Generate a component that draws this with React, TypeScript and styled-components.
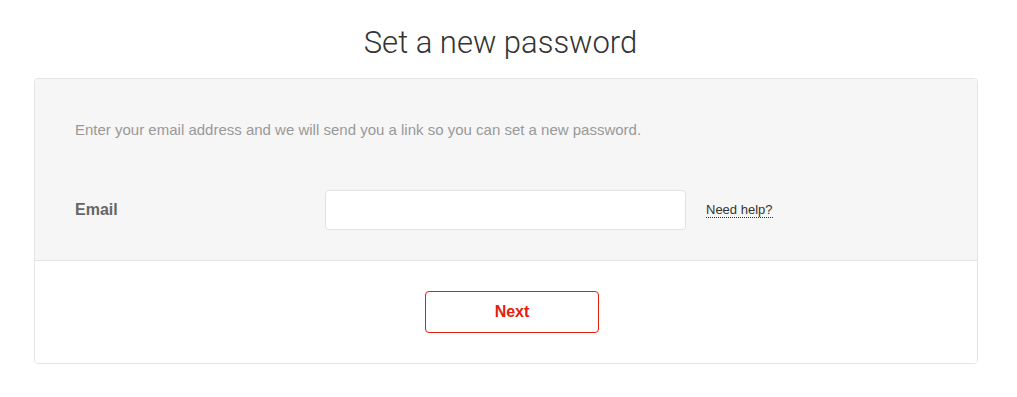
import React from "react";
import styled, { createGlobalStyle } from "styled-components";

const Global = createGlobalStyle`
  html, body { margin: 0; padding: 0; background: #fff; }
  body { font-family: "Liberation Sans", Arial, sans-serif; }
  * { box-sizing: border-box; }
`;

const Page = styled.div`
  padding: 0 39px 0 34px;
`;

const Title = styled.h1`
  margin: 0;
  padding: 24px 11px 0 0;
  height: 78px;
  text-align: center;
  font-family: Roboto, "Liberation Sans", sans-serif;
  font-weight: 300;
  font-size: 31px;
  line-height: 38px;
  color: #333;
`;

const Card = styled.div`
  border: 1px solid #e4e4e4;
  border-radius: 4px;
  overflow: hidden;
`;

const FormSection = styled.div`
  background: #f6f6f6;
  padding: 41px 40px 30px;
  border-bottom: 1px solid #e4e4e4;
`;

const Intro = styled.p`
  margin: 0 0 50px;
  font-size: 15px;
  line-height: 20px;
  color: #999;
`;

const Row = styled.div`
  display: flex;
  align-items: center;
`;

const Label = styled.label`
  width: 250px;
  font-size: 16px;
  font-weight: bold;
  color: #666;
`;

const Input = styled.input`
  width: 361px;
  height: 40px;
  border: 1px solid #e2e2e2;
  border-radius: 4px;
  background: #fff;
  outline: none;
  padding: 0 10px;
  font-size: 14px;
`;

const Help = styled.a`
  margin-left: 20px;
  font-size: 13px;
  color: #333;
  text-decoration: none;
  border-bottom: 1px dotted #333;
  line-height: 15px;
`;

const Actions = styled.div`
  display: flex;
  justify-content: center;
  padding: 30px 0 30px 12px;
  background: #fff;
`;

const NextButton = styled.button`
  width: 174px;
  height: 42px;
  border: 1px solid #e3200c;
  border-radius: 4px;
  background: #fff;
  color: #e3200c;
  font-family: "Liberation Sans", Arial, sans-serif;
  font-weight: bold;
  font-size: 16px;
  cursor: pointer;
`;

export default function App() {
  return (
    <Page>
      <Global />
      <Title>Set a new password</Title>
      <Card>
        <FormSection>
          <Intro>Enter your email address and we will send you a link so you can set a new password.</Intro>
          <Row>
            <Label htmlFor="email">Email</Label>
            <Input id="email" type="email" />
            <Help href="#">Need help?</Help>
          </Row>
        </FormSection>
        <Actions>
          <NextButton>Next</NextButton>
        </Actions>
      </Card>
    </Page>
  );
}
